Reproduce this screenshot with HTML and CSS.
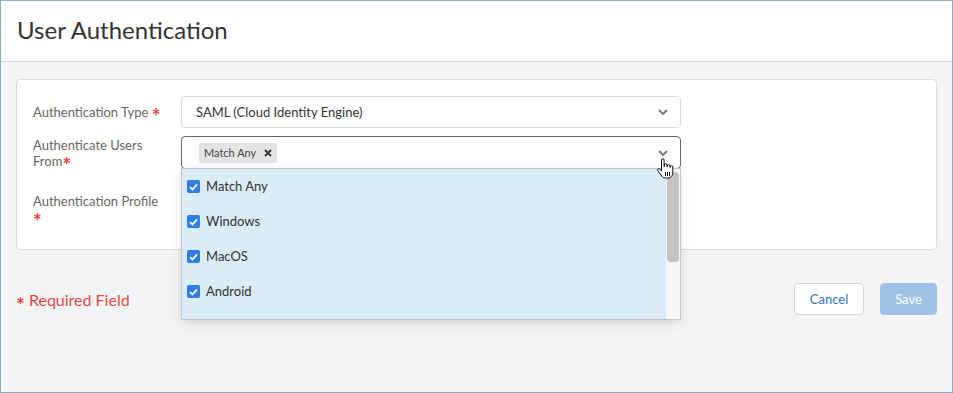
FILE: index.html
```html
<!DOCTYPE html>
<html lang="en">
<head>
    <meta charset="UTF-8">
    <title>User Authentication</title>
    <link rel="stylesheet" href="styles.css">
</head>
<body>
    <div class="dialog">
        <div class="dialog-header">
            <h1>User Authentication</h1>
        </div>
        <div class="dialog-body">
            <div class="card">
                <div class="form-row">
                    <label class="field-label">Authentication Type <span class="req">*</span></label>
                    <div class="field">
                        <div class="select">
                            <span class="select-value">SAML (Cloud Identity Engine)</span>
                            <svg class="chevron" width="10" height="6" viewBox="0 0 10 6"><polyline points="1,1 5,5 9,1" fill="none" stroke="#7a7a7a" stroke-width="2"/></svg>
                        </div>
                    </div>
                </div>
                <div class="form-row">
                    <label class="field-label">Authenticate Users From<span class="req">*</span></label>
                    <div class="field">
                        <div class="select multi focused">
                            <span class="tag">Match Any
                                <svg width="8" height="8" viewBox="0 0 8 8"><path d="M1 1L7 7M7 1L1 7" stroke="#333" stroke-width="1.8"/></svg>
                            </span>
                            <svg class="chevron" width="10" height="6" viewBox="0 0 10 6"><polyline points="1,1 5,5 9,1" fill="none" stroke="#7a7a7a" stroke-width="2"/></svg>
                        </div>
                        <div class="menu">
                            <div class="menu-list">
                                <div class="menu-item"><span class="checkbox"><svg width="9" height="8" viewBox="0 0 9 8"><path d="M1 4.2L3.5 6.5L8 1.3" fill="none" stroke="#fff" stroke-width="1.8"/></svg></span>Match Any</div>
                                <div class="menu-item"><span class="checkbox"><svg width="9" height="8" viewBox="0 0 9 8"><path d="M1 4.2L3.5 6.5L8 1.3" fill="none" stroke="#fff" stroke-width="1.8"/></svg></span>Windows</div>
                                <div class="menu-item"><span class="checkbox"><svg width="9" height="8" viewBox="0 0 9 8"><path d="M1 4.2L3.5 6.5L8 1.3" fill="none" stroke="#fff" stroke-width="1.8"/></svg></span>MacOS</div>
                                <div class="menu-item"><span class="checkbox"><svg width="9" height="8" viewBox="0 0 9 8"><path d="M1 4.2L3.5 6.5L8 1.3" fill="none" stroke="#fff" stroke-width="1.8"/></svg></span>Android</div>
                                <div class="menu-item"><span class="checkbox"><svg width="9" height="8" viewBox="0 0 9 8"><path d="M1 4.2L3.5 6.5L8 1.3" fill="none" stroke="#fff" stroke-width="1.8"/></svg></span>Android Mobile</div>
                            </div>
                            <div class="scrollbar"><div class="scroll-thumb"></div></div>
                        </div>
                        <svg class="cursor" width="18" height="21" viewBox="0 0 18 21">
                            <path d="M5.5 2a1.3 1.3 0 0 1 2.6 0v6.5h.3V7a1.3 1.3 0 0 1 2.6 0v2h.3V8a1.3 1.3 0 0 1 2.6 0v1.3h.3V9a1.3 1.3 0 0 1 2.6 0v5.5c0 3-1.7 5.5-4.5 5.5H9.2c-1.5 0-2.6-.7-3.4-1.8L1.8 12.6a1.3 1.3 0 0 1 2-1.6l1.7 2Z" fill="#fff" stroke="#111" stroke-width="1"/>
                            <path d="M9.5 14v4M11.5 14v4M13.5 14v4" stroke="#111" stroke-width="1"/>
                        </svg>
                    </div>
                </div>
                <div class="form-row last">
                    <label class="field-label">Authentication Profile <span class="req">*</span></label>
                    <div class="field">
                        <div class="select"></div>
                    </div>
                </div>
            </div>
            <div class="footer">
                <span class="required-note"><span class="req note-star">*</span>Required Field</span>
                <div class="buttons">
                    <button class="btn btn-cancel">Cancel</button>
                    <button class="btn btn-save">Save</button>
                </div>
            </div>
        </div>
    </div>
</body>
</html>
```

FILE: styles.css
```css
body {
    margin: 0;
    font-family: Lato, 'Liberation Sans', sans-serif;
    background-color: #ffffff;
}
.dialog {
    width: 953px;
    height: 393px;
    box-sizing: border-box;
    border: 1px solid #8eabbf;
    background-color: #f3f4f4;
    display: flex;
    flex-direction: column;
}
.dialog-header {
    height: 60px;
    background-color: #ffffff;
    border-bottom: 1px solid #d9d9d9;
    display: flex;
    align-items: center;
    padding-left: 16px;
}
.dialog-header h1 {
    margin: 0 0 4px 0;
    font-size: 24px;
    font-weight: 400;
    color: #333;
}
.dialog-body {
    padding: 17px 15px 0 15px;
}
.card {
    background-color: #ffffff;
    border: 1px solid #dcdcdc;
    border-radius: 4px;
    padding: 16px 16px 24px 16px;
}
.form-row {
    display: flex;
    align-items: center;
    margin-bottom: 8px;
}
.form-row.last {
    margin-top: 24px;
    margin-bottom: 0;
}
.field-label {
    width: 132px;
    margin-right: 16px;
    font-size: 13px;
    line-height: 16px;
    color: #666;
}
.req {
    color: #e04848;
    font-size: 21px;
    font-weight: 700;
    vertical-align: -7px;
    line-height: 0;
}
.note-star {
    margin-right: 4px;
}
.field {
    position: relative;
    width: 500px;
}
.select {
    height: 32px;
    box-sizing: border-box;
    border: 1px solid #dcdcdc;
    border-radius: 4px;
    display: flex;
    align-items: center;
    padding: 0 12px 0 14px;
    font-size: 13px;
    color: #333;
}
.select.multi {
    height: 33px;
    padding-left: 17px;
    border-color: #666;
}
.select-value {
    flex: 1;
}
.chevron {
    margin-left: auto;
}
.tag {
    background-color: #e4e4e4;
    border-radius: 2px;
    height: 20px;
    display: flex;
    align-items: center;
    gap: 8px;
    padding: 0 5px 0 5px;
    font-size: 11px;
    color: #444;
}
.menu {
    position: absolute;
    left: 0;
    top: 32px;
    width: 500px;
    height: 152px;
    box-sizing: border-box;
    border: 1px solid #c4c8cc;
    background-color: #daecf8;
    box-shadow: 0 3px 10px rgba(0, 0, 0, 0.12);
    display: flex;
    overflow: hidden;
    z-index: 2;
}
.menu-list {
    flex: 1;
}
.menu-item {
    height: 35px;
    display: flex;
    align-items: center;
    padding-left: 5px;
    font-size: 13px;
    color: #333;
}
.menu-item:first-child {
    margin-top: -1px;
}
.checkbox {
    width: 13px;
    height: 13px;
    border-radius: 2px;
    background-color: #2f7de8;
    display: flex;
    align-items: center;
    justify-content: center;
    margin: 2px 6px 0 0;
}
.scrollbar {
    width: 14px;
    background-color: #f7f7f7;
    padding: 3px 1px 0 1px;
    box-sizing: border-box;
}
.scroll-thumb {
    height: 90px;
    background-color: #c3c3c3;
    border-radius: 4px;
}
.cursor {
    position: absolute;
    left: 475px;
    top: 22px;
    z-index: 3;
}
.footer {
    display: flex;
    justify-content: space-between;
    align-items: center;
    margin-top: 33px;
}
.required-note {
    font-size: 16px;
    color: #e04848;
}
.buttons {
    display: flex;
    gap: 16px;
}
.btn {
    height: 32px;
    border-radius: 4px;
    font-family: Lato, 'Liberation Sans', sans-serif;
    font-size: 13px;
    padding: 0;
}
.btn-cancel {
    width: 70px;
    background-color: #ffffff;
    border: 1px solid #d6d6d6;
    color: #2d73c9;
}
.btn-save {
    width: 57px;
    background-color: #a0c2e6;
    border: 1px solid #a0c2e6;
    color: #ffffff;
}
```
